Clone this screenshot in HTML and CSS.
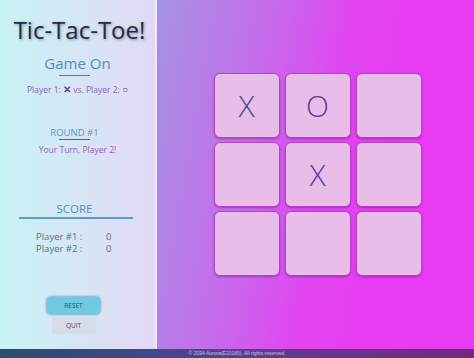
FILE: index.html
```html
<!DOCTYPE html>
<html lang="en">
<head>
<meta charset="utf-8">
<title>Tic-Tac-Toe!</title>
<link rel="stylesheet" href="styles.css">
</head>
<body>
<div class="app">
  <div class="main">
    <aside class="sidebar">
      <h1 class="title">Tic-Tac-Toe!</h1>
      <h2 class="status">Game On</h2>
      <div class="bar short"></div>
      <p class="players">Player 1: <span class="px">✕</span> vs. Player 2: <span class="po">○</span></p>
      <h3 class="round">ROUND #1</h3>
      <div class="bar short dark"></div>
      <p class="turn">Your Turn, Player 2!</p>
      <h3 class="score-title">SCORE</h3>
      <div class="bar long"></div>
      <div class="scores">
        <span>Player #1 :</span><span>0</span>
        <span>Player #2 :</span><span>0</span>
      </div>
      <button class="btn reset">RESET</button>
      <button class="btn quit">QUIT</button>
    </aside>
    <section class="board-area">
      <div class="board">
        <div class="cell x1">X</div>
        <div class="cell o1">O</div>
        <div class="cell"></div>
        <div class="cell"></div>
        <div class="cell x2">X</div>
        <div class="cell"></div>
        <div class="cell"></div>
        <div class="cell"></div>
        <div class="cell"></div>
      </div>
    </section>
  </div>
  <footer class="footer">© 2024 Aurora(E20180). All rights reserved.</footer>
</div>
</body>
</html>
```
FILE: styles.css
```css
* { box-sizing: border-box; }
html, body { margin: 0; padding: 0; }
body {
  width: 474px;
  height: 358px;
  overflow: hidden;
  font-family: "Open Sans", "Noto Sans", sans-serif;
}
.app {
  display: flex;
  flex-direction: column;
  height: 358px;
}
.main {
  flex: 1;
  display: flex;
  min-height: 0;
}
.sidebar {
  width: 157px;
  flex: none;
  display: flex;
  flex-direction: column;
  align-items: center;
  background: linear-gradient(to right, #c9f3f5, #e3d9f5);
  border-right: 2px solid #efe9fb;
}
.title {
  margin: 15px 0 0 4px;
  font-size: 24px;
  line-height: 30px;
  font-weight: 400;
  color: #252d3a;
  text-shadow: 1px 1px 3px rgba(40, 40, 70, 0.45);
}
.status {
  margin: 9px 0 0 0;
  font-size: 15px;
  line-height: 18px;
  font-weight: 400;
  color: #4b8fc2;
}
.bar {
  height: 1px;
  background: #3f7fb3;
}
.bar.short {
  width: 31px;
  margin: 3px 6px 0 0;
}
.bar.dark { background: #35679a; margin-top: 0; }
.bar.long {
  width: 114px;
  height: 1.5px;
  margin: 1px 3px 0 0;
  background: #5b9bd2;
}
.players {
  margin: 8px 0 0 0;
  font-size: 8.5px;
  line-height: 11px;
  color: #8a62b6;
}
.px { color: #5a3ea8; font-weight: 700; font-size: 9.5px; }
.po { color: #444; font-size: 10px; line-height: 8px; }
.round {
  margin: 32px 6px 0 0;
  font-size: 9.5px;
  line-height: 12px;
  font-weight: 400;
  color: #5a94c6;
}
.turn {
  margin: 4px 0 0 0;
  font-size: 8.5px;
  line-height: 11px;
  color: #9a5cc2;
}
.score-title {
  margin: 47px 6px 0 0;
  font-size: 11.5px;
  line-height: 14px;
  font-weight: 400;
  color: #4e8fc6;
}
.scores {
  margin: 12px 0 0 36px;
  align-self: flex-start;
  display: grid;
  grid-template-columns: 70px auto;
  font-size: 9.5px;
  line-height: 12.5px;
  color: #5f6c7c;
}
.btn {
  font-family: "Open Sans", "Noto Sans", sans-serif;
  font-size: 6.5px;
  line-height: 17px;
  height: 17px;
  padding: 0;
  border: none;
  color: #3f4c5c;
  cursor: pointer;
}
.reset {
  margin: 41px 8px 0 0;
  width: 53px;
  border-radius: 4px;
  background: #6dcbe1;
  box-shadow: 0 0 2px 1px rgba(60, 130, 170, 0.55);
}
.quit {
  margin: 3px 8px 0 0;
  width: 44px;
  background: #d7dce9;
}
.board-area {
  flex: 1;
  display: flex;
  align-items: center;
  justify-content: center;
  background: linear-gradient(100deg, #a592e2 0%, #c56cec 30%, #e046f1 52%, #e83bf2 70%, #e83bf2 100%);
}
.board {
  display: grid;
  grid-template-columns: repeat(3, 66px);
  grid-template-rows: repeat(3, 65px);
  column-gap: 5px;
  row-gap: 4px;
  margin: 0 0 1px 4px;
}
.cell {
  display: flex;
  align-items: center;
  justify-content: center;
  background: #e9bde9;
  border: 1.5px solid #b443c6;
  border-radius: 6px;
  box-shadow: 0 1px 2px rgba(90, 20, 110, 0.45);
  font-size: 30px;
  font-weight: 300;
  color: #4c4a92;
}
.o1 { color: #6b3493; }
.x2 { color: #5b3d92; }
.footer {
  height: 9px;
  flex: none;
  font-family: "Liberation Sans", Arial, sans-serif;
  font-size: 5px;
  line-height: 9px;
  text-align: center;
  color: #c9c6e2;
  background: linear-gradient(to right, #2b4d6c, #45478a 35%, #5e3c8c 55%, #732a80);
}
```
